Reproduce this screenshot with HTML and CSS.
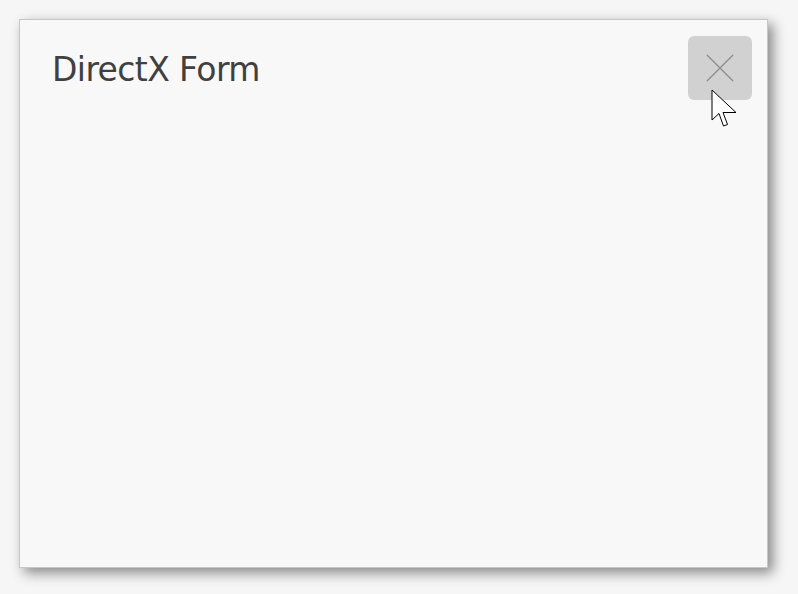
FILE: index.html
```html
<!DOCTYPE html>
<html>
<head>
<meta charset="utf-8">
<link rel="stylesheet" href="styles.css">
</head>
<body>
<div class="window">
  <div class="header">
    <h1 class="title">DirectX Form</h1>
    <button class="close" aria-label="Close">
      <svg class="close-x" width="28" height="28" viewBox="0 0 28 28">
        <path d="M1 1 L27 27 M27 1 L1 27" stroke="#8c8c8c" stroke-width="1.3" fill="none"/>
      </svg>
      <svg class="cursor" width="28" height="40" viewBox="0 0 28 40">
        <path d="M1 1 L1 31 L8 24.5 L12.5 37 L16.5 35.5 L12 23.5 L25 23.5 Z" fill="#fff" stroke="#000" stroke-width="1" stroke-linejoin="miter"/>
      </svg>
    </button>
  </div>
</div>
</body>
</html>
```
FILE: styles.css
```css
html, body {
  margin: 0;
  padding: 0;
}
body {
  background: #f6f6f6;
  width: 798px;
  height: 594px;
  overflow: hidden;
}
.window {
  box-sizing: border-box;
  margin: 19px 0 0 19px;
  width: 749px;
  height: 549px;
  background: #f8f8f8;
  border: 1px solid #c6c6c6;
  box-shadow: 5px 5px 12px rgba(0, 0, 0, 0.45);
}
.header {
  display: flex;
  justify-content: space-between;
  align-items: flex-start;
}
.title {
  margin: 30px 0 0 32px;
  font-family: "DejaVu Sans", sans-serif;
  font-weight: normal;
  font-size: 33px;
  line-height: 40px;
  letter-spacing: -0.6px;
  color: #404040;
}
.close {
  position: relative;
  margin: 16px 15px 0 0;
  width: 64px;
  height: 64px;
  padding: 0;
  border: none;
  border-radius: 6px;
  background: #d1d1d1;
  display: flex;
  align-items: center;
  justify-content: center;
}
.close-x {
  display: block;
}
.cursor {
  position: absolute;
  left: 23px;
  top: 53px;
}
```
